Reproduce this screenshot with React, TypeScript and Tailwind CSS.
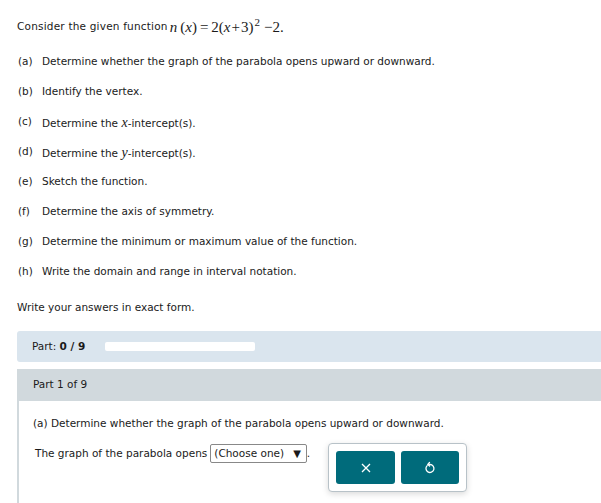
import React from "react";

const font = { fontFamily: '"DejaVu Sans", Verdana, sans-serif' };
const serif = { fontFamily: '"Liberation Serif", "Times New Roman", serif' };

function Item({ label, children }: { label: string; children: React.ReactNode }) {
  return (
    <div className="flex h-[30px] items-center">
      <span className="w-[24px] shrink-0">{label}</span>
      <span>{children}</span>
    </div>
  );
}

export default function App() {
  return (
    <div className="w-[601px] h-[503px] overflow-hidden bg-white text-[10.5px] text-[#1a1a1a]" style={font}>
      <div className="pl-[17px] pt-[15px]">
        <div className="flex h-[24px] items-center">
          <span className="tracking-[0.2px]">Consider the given function</span>
          <span className="ml-[2px] text-[15px] flex items-center" style={serif}>
            <i>n</i>
            <span className="ml-[3px]">(</span>
            <i>x</i>
            <span>)</span>
            <span className="mx-[3px]">=</span>
            <span>2(</span>
            <i>x</i>
            <span className="mx-[1px]">+</span>
            <span>3)</span>
            <span className="ml-[1px] text-[11px] -mt-[10px]">2</span>
            <span className="ml-[4px]">−2.</span>
          </span>
        </div>
        <div className="mt-[8px] pl-[1px]">
          <Item label="(a)">Determine whether the graph of the parabola opens upward or downward.</Item>
          <Item label="(b)">Identify the vertex.</Item>
          <Item label="(c)">
            Determine the <i style={serif} className="text-[14px]">x</i>-intercept(s).
          </Item>
          <Item label="(d)">
            Determine the <i style={serif} className="text-[14px]">y</i>-intercept(s).
          </Item>
          <Item label="(e)">Sketch the function.</Item>
          <Item label="(f)">Determine the axis of symmetry.</Item>
          <Item label="(g)">Determine the minimum or maximum value of the function.</Item>
          <Item label="(h)">Write the domain and range in interval notation.</Item>
        </div>
        <div className="mt-[6px] flex h-[30px] items-center">Write your answers in exact form.</div>
      </div>

      <div className="ml-[17px] mt-[8px] flex h-[31px] items-center rounded-l-[3px] bg-[#dae5ee] pl-[15px]">
        <span>
          Part: <b>0 / 9</b>
        </span>
        <div className="ml-[20px] h-[9px] w-[150px] rounded-[2px] bg-white" />
      </div>

      <div className="ml-[17px] mt-[7px] flex h-[32px] items-center bg-[#d1d9dd] pl-[16px]">Part 1 of 9</div>
      <div className="ml-[17px] h-[110px] border-l-2 border-[#d1d9dd] pl-[14px] pt-[14px]">
        <div className="flex h-[18px] items-center">(a) Determine whether the graph of the parabola opens upward or downward.</div>
        <div className="mt-[10px] flex items-start pl-[2px]">
          <span className="mt-[3px]">The graph of the parabola opens</span>
          <div className="ml-[3px] mt-[1px] flex h-[19px] items-center rounded-[2px] border border-[#888] pl-[3px] pr-[5px]">
            (Choose one)
            <span className="ml-[9px] text-[10px]">▼</span>
          </div>
          <span className="mt-[3px]">.</span>
          <div className="ml-[18px] flex gap-[6px] rounded-[4px] border border-[#b8c2c8] bg-white p-[7px] shadow-[0_2px_6px_rgba(0,0,0,0.15)]">
            <button className="flex h-[33px] w-[59px] items-center justify-center rounded-[3px] bg-[#006b7b] text-white">
              <svg width="12" height="12" viewBox="0 0 12 12" fill="none" stroke="white" strokeWidth="1.3">
                <path d="M2 2 L10 10 M10 2 L2 10" />
              </svg>
            </button>
            <button className="flex h-[33px] w-[58px] items-center justify-center rounded-[3px] bg-[#006b7b] text-white">
              <svg width="12" height="13" viewBox="0 0 12 13" fill="none" stroke="white" strokeWidth="1.3" strokeLinecap="round">
                <path d="M3.2 4.6 A4 4 0 1 0 6 3.5 L5 3.5" />
                <path d="M5.5 1.5 L3.8 3.4 L5.6 5" />
              </svg>
            </button>
          </div>
        </div>
      </div>
    </div>
  );
}
